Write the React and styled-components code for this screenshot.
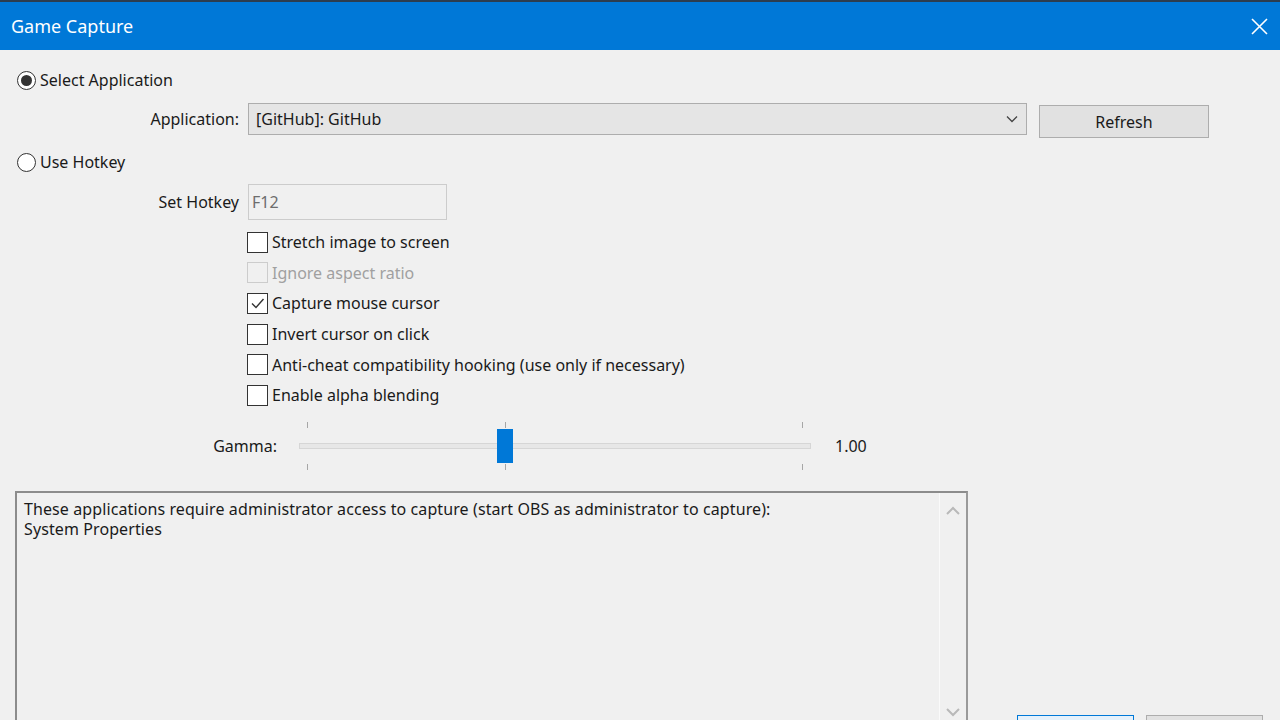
import React from 'react';
import styled, { createGlobalStyle } from 'styled-components';

const Global = createGlobalStyle`
  html, body {
    margin: 0;
    padding: 0;
    width: 1280px;
    height: 720px;
    overflow: hidden;
    background: #f0f0f0;
  }
  body {
    font-family: "Noto Sans", "Segoe UI", sans-serif;
    font-size: 16px;
    color: #1a1a1a;
  }
`;

const Window = styled.div`
  width: 1280px;
  height: 720px;
  display: flex;
  flex-direction: column;
  overflow: hidden;
  background: #f0f0f0;
`;

const TitleBar = styled.div`
  height: 48px;
  border-top: 2px solid #2c3d4f;
  background: #0078d7;
  color: #ffffff;
  display: flex;
  align-items: center;
  justify-content: space-between;
  padding: 0 12px 0 11px;
  font-size: 18px;
  flex-shrink: 0;
`;

const CloseIcon = styled.svg`
  width: 17px;
  height: 17px;
`;

const Body = styled.div`
  flex: 1;
  display: flex;
  flex-direction: column;
  padding: 20px 0 0 15px;
`;

const RadioRow = styled.label`
  display: flex;
  align-items: center;
  height: 20px;
  gap: 4px;
  margin-top: ${(p) => p.$top || 0}px;
`;

const RadioCircle = styled.span`
  width: 19px;
  height: 19px;
  margin-left: 2px;
  box-sizing: border-box;
  border: 1px solid #333333;
  border-radius: 50%;
  background: #ffffff;
  display: flex;
  align-items: center;
  justify-content: center;
  &::after {
    content: '';
    width: 11px;
    height: 11px;
    border-radius: 50%;
    background: ${(p) => (p.$checked ? '#333333' : 'transparent')};
  }
`;

const FieldRow = styled.div`
  display: grid;
  grid-template-columns: 233px auto auto;
  justify-content: start;
  align-items: start;
  margin-top: ${(p) => p.$top || 0}px;
`;

const FieldLabel = styled.span`
  text-align: right;
  padding-right: 9px;
  line-height: ${(p) => p.$h}px;
`;

const Combo = styled.div`
  width: 779px;
  height: 32px;
  box-sizing: border-box;
  border: 1px solid #adadad;
  background: #e5e5e5;
  display: flex;
  align-items: center;
  justify-content: space-between;
  padding: 0 7px 0 7px;
`;

const Chevron = styled.svg`
  width: 14px;
  height: 14px;
`;

const Button = styled.div`
  width: 170px;
  height: 33px;
  box-sizing: border-box;
  margin-left: 12px;
  margin-top: 2px;
  border: 1px solid #adadad;
  background: #e1e1e1;
  display: flex;
  align-items: center;
  justify-content: center;
`;

const HotkeyInput = styled.div`
  width: 199px;
  height: 36px;
  box-sizing: border-box;
  border: 1px solid #cccccc;
  background: #f0f0f0;
  color: #6d6d6d;
  display: flex;
  align-items: center;
  padding-left: 3px;
`;

const Checks = styled.div`
  display: flex;
  flex-direction: column;
  margin: 7px 0 0 232px;
`;

const CheckRow = styled.label`
  display: flex;
  align-items: center;
  gap: 4px;
  height: 30.6px;
  color: ${(p) => (p.$disabled ? '#a0a0a0' : '#1a1a1a')};
`;

const Box = styled.span`
  width: 21px;
  height: 21px;
  box-sizing: border-box;
  border: 1px solid ${(p) => (p.$disabled ? '#cccccc' : '#333333')};
  background: ${(p) => (p.$disabled ? '#f0f0f0' : '#ffffff')};
  display: flex;
  align-items: center;
  justify-content: center;
`;

const GammaRow = styled.div`
  display: flex;
  align-items: center;
  height: 48px;
  margin-top: 11px;
`;

const GammaLabel = styled.span`
  width: 262px;
  text-align: right;
`;

const Slider = styled.div`
  position: relative;
  width: 512px;
  height: 48px;
  margin-left: 22px;
  display: flex;
  align-items: center;
`;

const Track = styled.div`
  width: 100%;
  height: 6px;
  box-sizing: border-box;
  border: 1px solid #d6d6d6;
  background: #e7e7e7;
`;

const Tick = styled.span`
  position: absolute;
  left: ${(p) => p.$x}px;
  ${(p) => (p.$bottom ? 'bottom: 0;' : 'top: 0;')}
  width: 1px;
  height: 6px;
  background: #a6a6a6;
`;

const Thumb = styled.span`
  position: absolute;
  left: 198px;
  top: 7px;
  width: 16px;
  height: 34px;
  background: #0078d7;
`;

const GammaValue = styled.span`
  margin-left: 24px;
`;

const Lower = styled.div`
  display: flex;
  align-items: flex-start;
  margin-top: 21px;
`;

const InfoBox = styled.div`
  width: 953px;
  height: 280px;
  box-sizing: border-box;
  border: 2px solid #8c8c8c;
  border-right-color: #9a9a9a;
  display: flex;
  flex-shrink: 0;
`;

const InfoText = styled.div`
  flex: 1;
  padding: 6px 7px;
  line-height: 20px;
  letter-spacing: 0.1px;
`;

const ScrollBar = styled.div`
  width: 26px;
  border-left: 1px solid #fafafa;
  background: #f0f0f0;
  display: flex;
  flex-direction: column;
  align-items: center;
  padding-top: 13px;
  gap: 193px;
`;

const Actions = styled.div`
  display: flex;
  gap: 12px;
  margin: 224px 0 0 49px;
`;

const DialogButton = styled.div`
  width: 117px;
  height: 30px;
  box-sizing: border-box;
  border: 1px solid ${(p) => (p.$primary ? '#0078d7' : '#adadad')};
  background: ${(p) => (p.$primary ? '#e5f1fb' : '#e1e1e1')};
`;

function Radio({ checked, label, top }) {
  return (
    <RadioRow $top={top}>
      <RadioCircle $checked={checked} />
      {label}
    </RadioRow>
  );
}

function Check({ checked, disabled, label }) {
  return (
    <CheckRow $disabled={disabled}>
      <Box $disabled={disabled}>
        {checked && (
          <svg width="15" height="15" viewBox="0 0 15 15">
            <path d="M2 7.5 L6 11.5 L13.5 3" fill="none" stroke="#333" strokeWidth="1.4" />
          </svg>
        )}
      </Box>
      {label}
    </CheckRow>
  );
}

const ArrowUp = () => (
  <svg width="14" height="9" viewBox="0 0 14 9">
    <path d="M1 8 L7 2 L13 8" fill="none" stroke="#b9b9b9" strokeWidth="2" />
  </svg>
);

const ArrowDown = () => (
  <svg width="14" height="9" viewBox="0 0 14 9">
    <path d="M1 1 L7 7 L13 1" fill="none" stroke="#b9b9b9" strokeWidth="2" />
  </svg>
);

export default function App() {
  return (
    <Window>
      <Global />
      <TitleBar>
        <span>Game Capture</span>
        <CloseIcon viewBox="0 0 17 17">
          <path d="M1 1 L16 16 M16 1 L1 16" stroke="#fff" strokeWidth="1.6" />
        </CloseIcon>
      </TitleBar>
      <Body>
        <Radio checked label="Select Application" />
        <FieldRow $top={13}>
          <FieldLabel $h={32}>Application:</FieldLabel>
          <Combo>
            <span>[GitHub]: GitHub</span>
            <Chevron viewBox="0 0 14 14">
              <path d="M2 4.5 L7 9.5 L12 4.5" fill="none" stroke="#444" strokeWidth="1.3" />
            </Chevron>
          </Combo>
          <Button>Refresh</Button>
        </FieldRow>
        <Radio label="Use Hotkey" top={14} />
        <FieldRow $top={12}>
          <FieldLabel $h={36}>Set Hotkey</FieldLabel>
          <HotkeyInput>F12</HotkeyInput>
        </FieldRow>
        <Checks>
          <Check label="Stretch image to screen" />
          <Check disabled label="Ignore aspect ratio" />
          <Check checked label="Capture mouse cursor" />
          <Check label="Invert cursor on click" />
          <Check label="Anti-cheat compatibility hooking (use only if necessary)" />
          <Check label="Enable alpha blending" />
        </Checks>
        <GammaRow>
          <GammaLabel>Gamma:</GammaLabel>
          <Slider>
            <Track />
            <Tick $x={8} />
            <Tick $x={206} />
            <Tick $x={503} />
            <Tick $x={8} $bottom />
            <Tick $x={206} $bottom />
            <Tick $x={503} $bottom />
            <Thumb />
          </Slider>
          <GammaValue>1.00</GammaValue>
        </GammaRow>
        <Lower>
          <InfoBox>
            <InfoText>
              These applications require administrator access to capture (start OBS as administrator to capture):
              <br />
              System Properties
            </InfoText>
            <ScrollBar>
              <ArrowUp />
              <ArrowDown />
            </ScrollBar>
          </InfoBox>
          <Actions>
            <DialogButton $primary />
            <DialogButton />
          </Actions>
        </Lower>
      </Body>
    </Window>
  );
}
